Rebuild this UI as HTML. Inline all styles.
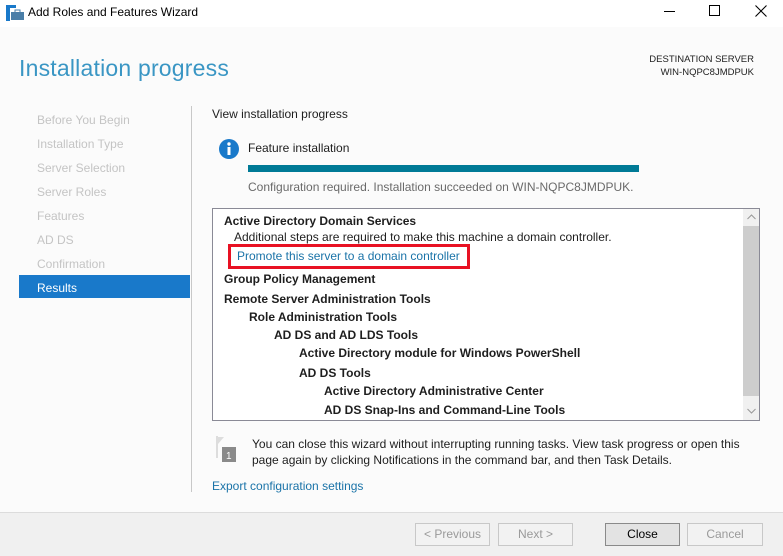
<!DOCTYPE html>
<html><head><style>
*{margin:0;padding:0;box-sizing:border-box}
body{width:783px;height:556px;overflow:hidden;background:#fbfbfb;font-family:"Liberation Sans",sans-serif;font-size:12px;color:#1e1e1e;position:relative}
.a{position:absolute;white-space:nowrap}
.nav{color:#c4c4c4;font-size:12px}
.b{font-weight:bold}
.btn{position:absolute;top:523px;height:23px;border:1px solid #c8c8c8;background:#f2f2f2;color:#9a9a9a;text-align:center;line-height:21px;font-size:12px}
</style></head><body>
<div class="a" style="left:0;top:0;width:783px;height:27px;background:#fff"></div>
<svg class="a" style="left:6px;top:5px" width="18" height="16"><rect x="0" y="0" width="4" height="16" fill="#1979ca"/><rect x="0" y="0" width="10" height="3" fill="#1979ca"/><rect x="5" y="7" width="13" height="8" fill="#4a7ea8"/><rect x="9" y="5" width="5" height="3" fill="none" stroke="#4a7ea8"/></svg>
<div class="a" style="left:28px;top:5px;font-size:12px;color:#000">Add Roles and Features Wizard</div>
<div class="a" style="left:664px;top:11px;width:11px;height:1px;background:#000"></div>
<div class="a" style="left:709px;top:5px;width:11px;height:11px;border:1px solid #000"></div>
<svg class="a" style="left:755px;top:5px" width="12" height="12"><path d="M0.5 0.5L11.5 11.5M11.5 0.5L0.5 11.5" stroke="#000" stroke-width="1.1"/></svg>
<div class="a" style="left:19px;top:55px;font-size:23px;color:#3a96c4;letter-spacing:0.2px">Installation progress</div>
<div class="a" style="left:640px;top:53px;font-size:9.5px;text-align:right;width:114px;line-height:13px;color:#222">DESTINATION SERVER<br>WIN-NQPC8JMDPUK</div>
<div class="a" style="left:191px;top:106px;width:1px;height:386px;background:#c8c8c8"></div>
<div class="a nav" style="left:37px;top:113px">Before You Begin</div>
<div class="a nav" style="left:37px;top:137px">Installation Type</div>
<div class="a nav" style="left:37px;top:161px">Server Selection</div>
<div class="a nav" style="left:37px;top:185px">Server Roles</div>
<div class="a nav" style="left:37px;top:209px">Features</div>
<div class="a nav" style="left:37px;top:233px">AD DS</div>
<div class="a nav" style="left:37px;top:257px">Confirmation</div>
<div class="a" style="left:19px;top:275px;width:171px;height:23px;background:#1979ca;color:#fff;padding:6px 0 0 18px">Results</div>
<div class="a" style="left:212px;top:107px">View installation progress</div>
<svg class="a" style="left:219px;top:139px" width="20" height="20"><circle cx="10" cy="10" r="10" fill="#1979ca"/><rect x="8.5" y="8" width="3" height="8" fill="#fff"/><circle cx="10" cy="5" r="1.7" fill="#fff"/></svg>
<div class="a" style="left:248px;top:141px">Feature installation</div>
<div class="a" style="left:248px;top:165px;width:391px;height:7px;background:#007a96"></div>
<div class="a" style="left:248px;top:180px;color:#6a6a6a">Configuration required. Installation succeeded on WIN-NQPC8JMDPUK.</div>
<div class="a" style="left:212px;top:208px;width:548px;height:213px;border:1px solid #8a8a96;background:#fff"></div>
<div class="a" style="left:743px;top:209px;width:16px;height:211px;background:#f0f0f0"></div>
<div class="a" style="left:743px;top:226px;width:16px;height:170px;background:#cdcdcd"></div>
<svg class="a" style="left:747px;top:214px" width="9" height="6"><path d="M0.5 5L4.5 1L8.5 5" stroke="#999" fill="none"/></svg>
<svg class="a" style="left:747px;top:408px" width="9" height="6"><path d="M0.5 1L4.5 5L8.5 1" stroke="#999" fill="none"/></svg>
<div class="a b" style="left:224px;top:214px">Active Directory Domain Services</div>
<div class="a" style="left:234px;top:230px">Additional steps are required to make this machine a domain controller.</div>
<div class="a" style="left:228px;top:244px;width:242px;height:25px;border:3px solid #e81123"></div>
<div class="a" style="left:237px;top:249px;color:#1a73a8">Promote this server to a domain controller</div>
<div class="a b" style="left:224px;top:272px">Group Policy Management</div>
<div class="a b" style="left:224px;top:292px">Remote Server Administration Tools</div>
<div class="a b" style="left:249px;top:310px">Role Administration Tools</div>
<div class="a b" style="left:274px;top:328px">AD DS and AD LDS Tools</div>
<div class="a b" style="left:299px;top:346px">Active Directory module for Windows PowerShell</div>
<div class="a b" style="left:299px;top:366px">AD DS Tools</div>
<div class="a b" style="left:324px;top:384px">Active Directory Administrative Center</div>
<div class="a b" style="left:324px;top:403px">AD DS Snap-Ins and Command-Line Tools</div>
<svg class="a" style="left:214px;top:436px" width="24" height="28"><rect x="2" y="0" width="2" height="22" fill="#ddd"/><polygon points="4,1 10,1 4,8" fill="#ddd"/><rect x="8" y="11" width="14" height="15" fill="#8a8a8a"/><text x="12" y="23" font-size="10" fill="#fff" font-family="Liberation Sans">1</text></svg>
<div class="a" style="left:252px;top:436px;line-height:16px">You can close this wizard without interrupting running tasks. View task progress or open this<br>page again by clicking Notifications in the command bar, and then Task Details.</div>
<div class="a" style="left:212px;top:479px;color:#1a73a8">Export configuration settings</div>
<div class="a" style="left:0;top:512px;width:783px;height:44px;background:#f0f0f0;border-top:1px solid #dcdcdc"></div>
<div class="btn" style="left:415px;width:75px">&lt; Previous</div>
<div class="btn" style="left:498px;width:75px">Next &gt;</div>
<div class="btn" style="left:605px;width:75px;border-color:#8a8a8a;background:#e3e3e3;color:#000">Close</div>
<div class="btn" style="left:687px;width:76px">Cancel</div>
</body></html>
